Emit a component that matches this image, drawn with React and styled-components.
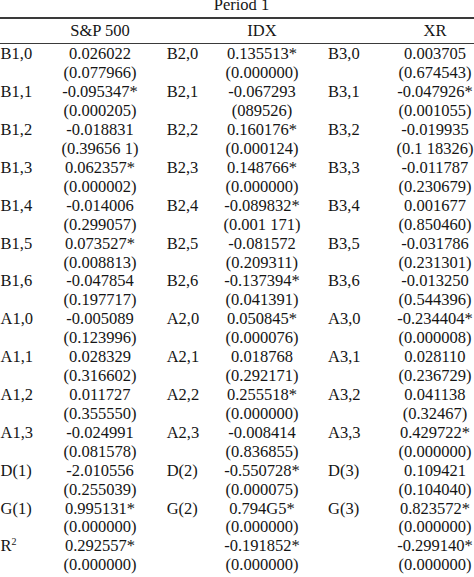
import React from "react"
import styled, { createGlobalStyle } from "styled-components"

const GlobalStyle = createGlobalStyle`
    html, body {
        margin: 0;
        padding: 0;
        background: #ffffff;
        overflow: hidden;
    }
    body {
        font-family: "Liberation Serif", "Times New Roman", serif;
        color: #151515;
    }
`

const COLUMNS = "60px 80px 80px 84px 68px 111px"

const rows = [
    [["B1,0", "0.026022", "(0.077966)"], ["B2,0", "0.135513*", "(0.000000)"], ["B3,0", "0.003705", "(0.674543)"]],
    [["B1,1", "-0.095347*", "(0.000205)"], ["B2,1", "-0.067293", "(089526)"], ["B3,1", "-0.047926*", "(0.001055)"]],
    [["B1,2", "-0.018831", "(0.39656 1)"], ["B2,2", "0.160176*", "(0.000124)"], ["B3,2", "-0.019935", "(0.1 18326)"]],
    [["B1,3", "0.062357*", "(0.000002)"], ["B2,3", "0.148766*", "(0.000000)"], ["B3,3", "-0.011787", "(0.230679)"]],
    [["B1,4", "-0.014006", "(0.299057)"], ["B2,4", "-0.089832*", "(0.001 171)"], ["B3,4", "0.001677", "(0.850460)"]],
    [["B1,5", "0.073527*", "(0.008813)"], ["B2,5", "-0.081572", "(0.209311)"], ["B3,5", "-0.031786", "(0.231301)"]],
    [["B1,6", "-0.047854", "(0.197717)"], ["B2,6", "-0.137394*", "(0.041391)"], ["B3,6", "-0.013250", "(0.544396)"]],
    [["A1,0", "-0.005089", "(0.123996)"], ["A2,0", "0.050845*", "(0.000076)"], ["A3,0", "-0.234404*", "(0.000008)"]],
    [["A1,1", "0.028329", "(0.316602)"], ["A2,1", "0.018768", "(0.292171)"], ["A3,1", "0.028110", "(0.236729)"]],
    [["A1,2", "0.011727", "(0.355550)"], ["A2,2", "0.255518*", "(0.000000)"], ["A3,2", "0.041138", "(0.32467)"]],
    [["A1,3", "-0.024991", "(0.081578)"], ["A2,3", "-0.008414", "(0.836855)"], ["A3,3", "0.429722*", "(0.000000)"]],
    [["D(1)", "-2.010556", "(0.255039)"], ["D(2)", "-0.550728*", "(0.000075)"], ["D(3)", "0.109421", "(0.104040)"]],
    [["G(1)", "0.995131*", "(0.000000)"], ["G(2)", "0.794G5*", "(0.000000)"], ["G(3)", "0.823572*", "(0.000000)"]],
    [["R2", "0.292557*", "(0.000000)"], ["", "-0.191852*", "(0.000000)"], ["", "-0.299140*", "(0.000000)"]],
]

const Label = ({ text }) =>
    text === "R2" ? <>R<Sup>2</Sup></> : text

export default function App() {
    return (
        <Page>
            <GlobalStyle />
            <Title>Period 1</Title>
            <Rule />
            <Header>
                <Cell />
                <Value>S&amp;P 500</Value>
                <Cell $pad={ 26.7 } />
                <Value>IDX</Value>
                <Cell $pad={ 24 } />
                <Value $pad={ 15 }>XR</Value>
            </Header>
            <Rule />
            <Body>
                { rows.map((row, i) => (
                    <React.Fragment key={ i }>
                        <Cell $pad={ 0.5 }><Label text={ row[0][0] } /></Cell>
                        <Value>{ row[0][1] }</Value>
                        <Cell $pad={ 26.7 }>{ row[1][0] }</Cell>
                        <Value>{ row[1][1] }</Value>
                        <Cell $pad={ 24 }>{ row[2][0] }</Cell>
                        <Value $pad={ 15 }>{ row[2][1] }</Value>

                        <Cell />
                        <Value>{ row[0][2] }</Value>
                        <Cell />
                        <Value>{ row[1][2] }</Value>
                        <Cell />
                        <Value $pad={ 15 }>{ row[2][2] }</Value>
                    </React.Fragment>
                )) }
            </Body>
        </Page>
    )
}

const Page = styled.div`
    width: 483px;
    font-size: 16.5px;
`
const Title = styled.div`
    text-align: center;
    line-height: 10px;
    height: 10px;
    margin-bottom: 7px;
`
const Rule = styled.div`
    height: 1.5px;
    background: #3a3a3a;
`
const Header = styled.div`
    display: grid;
    grid-template-columns: ${ COLUMNS };
    grid-auto-rows: 18.93px;
    line-height: 18.93px;
    padding-top: 3.2px;
    padding-bottom: 2.3px;
`
const Body = styled.div`
    display: grid;
    grid-template-columns: ${ COLUMNS };
    grid-auto-rows: 18.93px;
    line-height: 18.93px;
    padding-top: 1px;
`
const Cell = styled.div`
    padding-left: ${ ({ $pad }) => $pad || 0 }px;
    white-space: nowrap;
`
const Value = styled.div`
    padding-left: ${ ({ $pad }) => $pad || 0 }px;
    text-align: center;
    white-space: nowrap;
`
const Sup = styled.sup`
    font-size: 10px;
    line-height: 0;
    vertical-align: 6px;
`
